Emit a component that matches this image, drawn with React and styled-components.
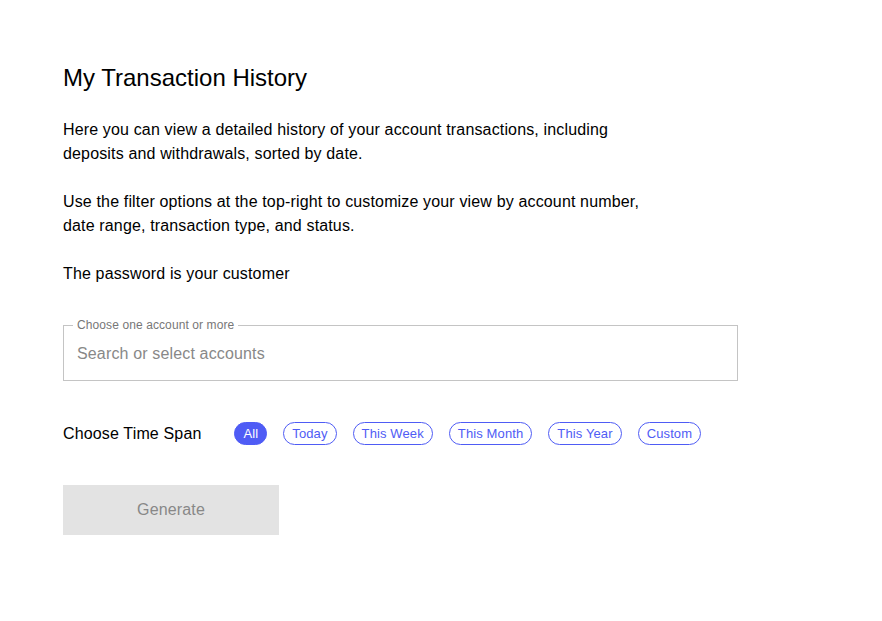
import React, { useState } from 'react';
import styled, { createGlobalStyle } from 'styled-components';

const spans = ['All', 'Today', 'This Week', 'This Month', 'This Year', 'Custom'];

export default function App() {
  const [active, setActive] = useState('All');
  const [query, setQuery] = useState('');

  return (
    <>
      <GlobalStyle />
      <Page>
        <Title>My Transaction History</Title>
        <Intro>
          <p>
            Here you can view a detailed history of your account transactions, including
            deposits and withdrawals, sorted by date.
          </p>
          <p>
            Use the filter options at the top-right to customize your view by account number,
            date range, transaction type, and status.
          </p>
          <p>The password is your customer</p>
        </Intro>

        <AccountField>
          <legend>Choose one account or more</legend>
          <AccountInput
            value={query}
            onChange={(e) => setQuery(e.target.value)}
            placeholder='Search or select accounts'
          />
        </AccountField>

        <SpanRow>
          <SpanLabel>Choose Time Span</SpanLabel>
          <ChipList>
            {spans.map((s) => (
              <Chip key={s} $active={active === s} onClick={() => setActive(s)}>
                {s}
              </Chip>
            ))}
          </ChipList>
        </SpanRow>

        <GenerateBtn disabled>Generate</GenerateBtn>
      </Page>
    </>
  );
}

const GlobalStyle = createGlobalStyle`
  body {
    margin: 0;
    background: #fff;
    font-family: 'Liberation Sans', Arial, sans-serif;
    color: #000;
  }
`;

const Page = styled.main`
  display: flex;
  flex-direction: column;
  align-items: flex-start;
  padding: 64px 63px 0;
`;

const Title = styled.h1`
  margin: 0;
  font-size: 24px;
  font-weight: 400;
  line-height: 28px;
`;

const Intro = styled.div`
  margin-top: 26px;
  max-width: 600px;
  font-size: 16px;
  line-height: 24px;
  letter-spacing: 0.15px;
  p {
    margin: 0 0 24px;
  }
  p:last-child {
    margin-bottom: 0;
  }
`;

const AccountField = styled.fieldset`
  box-sizing: border-box;
  width: 675px;
  height: 63px;
  margin: 32px 0 0;
  padding: 0 13px;
  border: 1px solid #c4c4c4;
  legend {
    padding: 0 4px;
    margin-left: -4px;
    font-size: 12px;
    line-height: 14px;
    letter-spacing: 0.1px;
    color: #777;
  }
`;

const AccountInput = styled.input`
  display: block;
  width: 100%;
  margin-top: 12px;
  padding: 0;
  border: none;
  outline: none;
  font-family: inherit;
  font-size: 16px;
  line-height: 20px;
  letter-spacing: 0.15px;
  color: #333;
  &::placeholder {
    color: #888;
  }
`;

const SpanRow = styled.div`
  display: flex;
  align-items: center;
  gap: 33px;
  margin-top: 41px;
`;

const SpanLabel = styled.span`
  font-size: 16px;
  line-height: 22px;
  letter-spacing: 0.15px;
`;

const ChipList = styled.div`
  display: flex;
  gap: 16px;
`;

const Chip = styled.button`
  box-sizing: border-box;
  height: 23px;
  padding: 0 8px;
  border-radius: 12px;
  border: 1px solid #4f5cf5;
  background: ${(p) => (p.$active ? '#4f5cf5' : '#fff')};
  color: ${(p) => (p.$active ? '#fff' : '#4f5cf5')};
  font-family: inherit;
  font-size: 13px;
  line-height: 21px;
  letter-spacing: 0.12px;
  cursor: pointer;
`;

const GenerateBtn = styled.button`
  width: 216px;
  height: 50px;
  margin-top: 40px;
  border: none;
  background: #e3e3e3;
  color: #888;
  font-family: inherit;
  font-size: 16px;
  letter-spacing: 0.15px;
`;
